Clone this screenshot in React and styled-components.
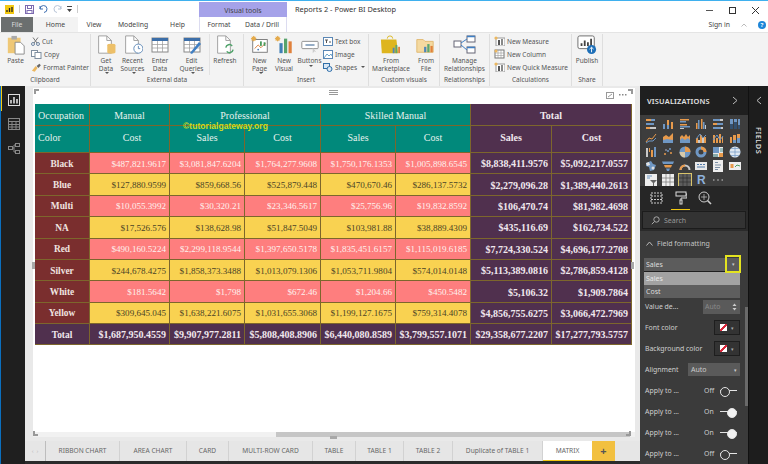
import React from 'react';
import styled, { createGlobalStyle } from 'styled-components';

const Global = createGlobalStyle`
  html, body { margin: 0; padding: 0; background: #fff; }
  * { box-sizing: border-box; }
`;

const Shell = styled.div`
  width: 768px;
  height: 464px;
  overflow: hidden;
  display: flex;
  flex-direction: column;
  position: relative;
  font-family: "Noto Sans", sans-serif;
  font-size: 6.5px;
  color: #444;
  background: #fff;
  border-top: 1px solid #3fb0ee;
`;

const TitleBar = styled.div`
  height: 16px;
  display: flex;
  align-items: center;
  padding-left: 5px;
  flex: none;
  background: #fff;
`;

const QuickAccess = styled.div`
  width: 194px;
  display: flex;
  align-items: center;
  gap: 5px;
`;

const Divider = styled.span`
  width: 1px;
  height: 8px;
  background: #ccc;
`;

const ContextHeader = styled.div`
  width: 88px;
  height: 16px;
  margin-top: 1px;
  background: #a5a2e9;
  color: #444;
  font-size: 7px;
  text-align: center;
  line-height: 18px;
`;

const WindowTitle = styled.div`
  margin-left: 8px;
  font-size: 7.4px;
  color: #333;
  flex: 1;
`;

const WindowButtons = styled.div`
  display: flex;
  align-items: center;
  gap: 16px;
  padding-right: 9px;
  margin-top: 2px;
`;

const TabRow = styled.div`
  height: 15px;
  display: flex;
  flex: none;
  align-items: stretch;
  padding-left: 1px;
  background: #fff;
`;

const Tab = styled.div`
  width: ${(p) => p.$w}px;
  text-align: center;
  font-size: 6.8px;
  line-height: 15px;
  color: ${(p) => (p.$file ? '#ddd' : '#444')};
  background: ${(p) => (p.$file ? '#6b6f6f' : p.$active ? '#f3f3f3' : 'transparent')};
  border-left: ${(p) => (p.$ctx ? '1px solid #dcdcf0' : 'none')};
  border-right: ${(p) => (p.$ctxEnd ? '1px solid #dcdcf0' : 'none')};
`;

const SignIn = styled.div`
  margin-left: auto;
  display: flex;
  align-items: center;
  gap: 11px;
  padding-right: 2px;
  font-size: 6.8px;
  color: #444;
`;

const HelpDot = styled.span`
  width: 8px;
  height: 8px;
  border-radius: 50%;
  background: #1e86d8;
  color: #fff;
  font-size: 6px;
  font-weight: 700;
  line-height: 8px;
  text-align: center;
`;

const Ribbon = styled.div`
  height: 54px;
  flex: none;
  display: flex;
  background: #f3f3f3;
  border-top: 1px solid #e4e4e4;
`;

const Group = styled.div`
  width: ${(p) => p.$w}px;
  height: 52px;
  margin-top: 1px;
  display: flex;
  flex-direction: column;
  border-right: 1px solid #dedede;
`;

const GroupBody = styled.div`
  height: 41px;
  flex: none;
  display: flex;
  justify-content: ${(p) => p.$justify || 'flex-start'};
  padding-left: ${(p) => p.$pad || 0}px;
`;

const GroupLabel = styled.div`
  height: 11px;
  text-align: center;
  font-size: 6.5px;
  line-height: 10px;
  color: #555;
`;

const BigButton = styled.div`
  width: ${(p) => p.$w}px;
  display: flex;
  flex-direction: column;
  align-items: center;
  padding-top: 1px;
  line-height: 7.6px;
  text-align: center;
  color: #555;
  white-space: nowrap;
  border-right: ${(p) => (p.$sep ? '1px solid #e2e2e2' : 'none')};
`;

const BigIcon = styled.div`
  height: 20px;
  margin-bottom: 2px;
  & > svg { display: block; height: 20px; width: auto; }
`;

const SmallStack = styled.div`
  width: ${(p) => p.$w}px;
  display: flex;
  flex-direction: column;
  gap: 3px;
  padding-top: 2px;
`;

const SmallButton = styled.div`
  height: 10px;
  display: flex;
  align-items: center;
  gap: 2px;
  color: #555;
  white-space: nowrap;
`;

const Main = styled.div`
  flex: 1;
  min-height: 0;
  display: flex;
`;

const LeftRail = styled.div`
  width: 25px;
  flex: none;
  background: #1f1f1f;
  border-left: 1px solid #0b6fbe;
  display: flex;
  flex-direction: column;
`;

const RailItem = styled.div`
  height: 25px;
  display: flex;
  align-items: center;
  justify-content: center;
  padding-top: ${(p) => p.$top || 0}px;
  border-left: 1px solid ${(p) => (p.$active ? '#f2c811' : 'transparent')};
`;

const Center = styled.div`
  width: 615px;
  flex: none;
  display: flex;
  flex-direction: column;
  background: #e9e9e9;
  border-bottom: 3px solid #2b2b2b;
`;

const Canvas = styled.div`
  flex: 1;
  min-height: 0;
  padding: 2px 5px 4px 8px;
  display: flex;
  flex-direction: column;
  position: relative;
`;

const Page = styled.div`
  flex: 1;
  background: #fff;
  padding-left: 2px;
`;

const VisualHead = styled.div`
  height: 16px;
  width: 597px;
  display: flex;
  align-items: center;
  justify-content: flex-end;
  gap: 5px;
  padding: 0 5px 2px 0;
`;

const Corner = styled.span`
  position: absolute;
  width: 5px;
  height: 5px;
  ${(p) => p.$tl && 'left: 9px; top: 3px; border-left: 2px solid #999; border-top: 2px solid #999;'}
  ${(p) => p.$tr && 'left: 603px; top: 3px; border-right: 2px solid #999; border-top: 2px solid #999;'}
  ${(p) => p.$bl && 'left: 8px; bottom: 5px; border-left: 2px solid #999; border-bottom: 2px solid #999;'}
  ${(p) => p.$br && 'left: 601px; bottom: 5px; border-right: 2px solid #999; border-bottom: 2px solid #999;'}
`;

const Grip = styled.span`
  position: absolute;
  background: #a8a8a8;
  ${(p) => p.$pos === 'left' && 'left: 7px; top: 176px; width: 3px; height: 7px;'}
  ${(p) => p.$pos === 'right' && 'left: 606px; top: 176px; width: 3px; height: 7px;'}
  ${(p) => p.$pos === 'bottom' && 'left: 305px; bottom: 2px; width: 7px; height: 3px;'}
`;

const TopGrip = styled.span`
  position: absolute;
  left: 304px;
  top: 4px;
  width: 9px;
  height: 5px;
  border-top: 1px solid #999;
  border-bottom: 1px solid #999;
  &::after {
    content: '';
    display: block;
    margin-top: 1px;
    height: 1px;
    background: #999;
  }
`;

const Matrix = styled.div`
  position: relative;
  width: 597px;
  display: grid;
  grid-template-columns: 55px 5px 75px 75px 76px 75px 75px 81px 80px;
  grid-template-rows: 22px 27px repeat(8, 21.4px) 21px;
  font-family: "Liberation Serif", serif;
`;

const toneColors = {
  teal: ['#01897b', '#e6f2ee'],
  maroon: ['#7a2e2e', '#f0e4e0'],
  pink: ['#fe7e7e', '#fdf2ee'],
  yellow: ['#f9d251', '#4a4326'],
  purple: ['#50304e', '#f0e8ee'],
};

const Cell = styled.div`
  grid-column: span ${(p) => p.$span || 1};
  background: ${(p) => toneColors[p.$tone][0]};
  color: ${(p) => toneColors[p.$tone][1]};
  border-right: 1px solid #7d662c;
  border-bottom: 1px solid #7d662c;
  display: flex;
  align-items: ${(p) => (p.$head ? 'flex-start' : 'center')};
  justify-content: ${(p) => p.$align || 'flex-end'};
  padding: ${(p) => (p.$head ? '6px 3px 0' : '1px 3px 0')};
  font-size: ${(p) => (p.$name ? 9.4 : p.$bold || p.$head ? 10 : 9.1)}px;
  font-weight: ${(p) => (p.$bold ? 700 : 400)};
  white-space: nowrap;
  overflow: hidden;
`;

const Watermark = styled.div`
  position: absolute;
  left: 148px;
  top: 17px;
  font-family: "Liberation Sans", sans-serif;
  font-size: 8.6px;
  font-weight: 700;
  color: #cfdc1e;
`;

const HScroll = styled.div`
  height: 5px;
  flex: none;
  background: #f1f1f1;
  display: flex;
  align-items: center;
  padding: 0 5px 0 243px;
  margin-top: 0;
`;

const HThumb = styled.div`
  flex: 1;
  height: 5px;
  background: #c6c6c6;
`;

const SheetBar = styled.div`
  height: 20px;
  flex: none;
  display: flex;
  background: #e6e6e6;
  align-items: stretch;
`;

const SheetArrows = styled.div`
  width: 21px;
  display: flex;
  align-items: center;
  justify-content: center;
  gap: 3px;
  font-size: 6px;
  color: #bbb;
  border-right: 1px solid #bdbdbd;
`;

const Sheet = styled.div`
  width: ${(p) => p.$w}px;
  text-align: center;
  font-size: 6.6px;
  line-height: 20px;
  color: #666;
  white-space: nowrap;
  background: ${(p) => (p.$active ? '#fff' : 'transparent')};
  border-right: ${(p) => (p.$active ? 'none' : '1px solid #d2d2d2')};
  border-bottom: ${(p) => (p.$active ? '1px solid #f2c811' : 'none')};
`;

const AddSheet = styled.div`
  width: 23px;
  background: #f2c040;
  color: #555;
  font-size: 11px;
  font-weight: 700;
  line-height: 19px;
  text-align: center;
`;

const Panel = styled.div`
  width: 108px;
  flex: none;
  background: #3b3b3b;
  display: flex;
  flex-direction: column;
  position: relative;
`;

const PanelHead = styled.div`
  height: 29px;
  flex: none;
  background: #1f1f1f;
  display: flex;
  align-items: center;
  justify-content: space-between;
  padding: 0 10px 0 7px;
  color: #e4e4e4;
  font-size: 7.4px;
  font-weight: 600;
  letter-spacing: 0.2px;
`;

const VizGrid = styled.div`
  height: 71px;
  flex: none;
  margin-left: 2px;
  background: #3d3d3d;
  display: grid;
  grid-template-columns: repeat(6, 16.7px);
  grid-auto-rows: 14px;
  padding: 2px 0 0 1px;
  justify-items: center;
  align-items: center;
`;

const VizSlot = styled.div`
  width: 14px;
  height: 14px;
  display: flex;
  align-items: center;
  justify-content: center;
  border: 1px solid ${(p) => (p.$selected ? '#d9c46a' : 'transparent')};
  color: #8fb2dc;
  font-family: "Liberation Sans", sans-serif;
  font-size: 12px;
  font-weight: 700;
`;

const PaneTabs = styled.div`
  height: 24px;
  flex: none;
  background: #262626;
  display: flex;
  padding-left: 7px;
  gap: 5px;
`;

const PaneTab = styled.div`
  width: 19px;
  display: flex;
  align-items: center;
  justify-content: center;
  border-bottom: 1px solid ${(p) => (p.$active ? '#f2c811' : 'transparent')};
`;

const SearchWrap = styled.div`
  height: 21px;
  flex: none;
  background: #2a2a2a;
  padding: 1px 2px 2px 2px;
`;

const SearchBox = styled.div`
  height: 18px;
  background: #333;
  border: 1px solid #1c1c1c;
  display: flex;
  align-items: center;
  gap: 4px;
  padding-left: 8px;
  color: #999;
  font-size: 7px;
`;

const PaneBody = styled.div`
  flex: 1;
  min-height: 0;
  position: relative;
  padding: 0 2px 0 5px;
  color: #cfcfcf;
  font-size: 6.9px;
`;

const SectionHead = styled.div`
  height: 27px;
  display: flex;
  align-items: center;
  gap: 4px;
  padding: 0 0 2px 1px;
  font-size: 7px;
  color: #c4c4c4;
`;

const SelectWrap = styled.div`
  position: relative;
  width: 96px;
  margin-left: -1px;
  height: 38px;
  z-index: 1;
`;

const SelectTop = styled.div`
  height: 14px;
  background: #5c5c5c;
  border-bottom: 1px solid #1f1f1f;
  display: flex;
  align-items: center;
  padding-left: 2px;
  color: #ddd;
  font-size: 7px;
`;

const Highlight = styled.span`
  position: absolute;
  right: -1px;
  top: -3px;
  width: 16px;
  height: 18px;
  border: 2px solid #e3e320;
  display: flex;
  align-items: center;
  justify-content: center;
  color: #ccc;
  font-size: 5px;
`;

const Option = styled.div`
  height: 13px;
  padding-left: 2px;
  line-height: 13px;
  font-size: 7px;
  color: ${(p) => (p.$active ? '#e8e8e8' : '#ddd')};
  background: ${(p) => (p.$active ? '#a2a2a2' : '#5e5e5e')};
`;

const FormRow = styled.div`
  height: 21px;
  width: 95px;
  display: flex;
  align-items: center;
  justify-content: space-between;
  white-space: nowrap;
`;

const SpinBox = styled.div`
  width: 37px;
  height: 14px;
  background: #5a5a5a;
  color: #8a8a8a;
  display: flex;
  align-items: center;
  justify-content: space-between;
  padding: 0 3px 0 2px;
`;

const ColorPick = styled.div`
  width: 26px;
  height: 15px;
  background: #333;
  border: 1px solid #1e1e1e;
  display: flex;
  align-items: center;
  justify-content: center;
  gap: 4px;
  color: #aaa;
  font-size: 5px;
`;

const Swatch = styled.span`
  width: 7px;
  height: 7px;
  background: linear-gradient(135deg, #fff 42%, #d8283c 42%, #d8283c 58%, #fff 58%);
`;

const AlignSelect = styled.div`
  width: 52px;
  height: 13px;
  background: #5a5a5a;
  color: #ccc;
  display: flex;
  align-items: center;
  justify-content: space-between;
  padding: 0 3px 0 3px;
  font-size: 5px;
  & > span:first-child { font-size: 7px; }
`;

const ToggleGroup = styled.div`
  display: flex;
  align-items: center;
  gap: 6px;
  width: 36px;
  justify-content: flex-start;
`;

const ToggleTrack = styled.span`
  position: relative;
  width: 17px;
  height: 1px;
  background: #e4e4e4;
  &::after {
    content: '';
    position: absolute;
    top: -3px;
    ${(p) => (p.$on ? 'right: 0; background: #f2f2f2;' : 'left: 0; background: #3b3b3b;')}
    width: 8px;
    height: 8px;
    border-radius: 50%;
    border: 1px solid #e4e4e4;
  }
`;

const ScrollThumb = styled.span`
  position: absolute;
  left: 105px;
  top: 76px;
  width: 3px;
  height: 99px;
  background: #6a6a6a;
`;

const FieldsStrip = styled.div`
  width: 20px;
  flex: none;
  background: #1d1d1d;
  border-left: 1px solid #111;
  color: #ddd;
  display: flex;
  flex-direction: column;
  align-items: center;
  padding-top: 10px;
  gap: 22px;
`;

const FieldsLabel = styled.div`
  writing-mode: vertical-rl;
  font-size: 7.4px;
  font-weight: 600;
  letter-spacing: 0.5px;
`;

const O = '#e79a4c';
const B = '#6f97c4';
const G = '#c9c9c9';

function Rects({ list }) {
  return list.map(([x, y, w, h, c], i) => <rect key={i} x={x} y={y} width={w} height={h} fill={c} />);
}

function Mini({ children }) {
  return <svg width="12" height="12" viewBox="0 0 12 12">{children}</svg>;
}

const hBars = [[1, 1, 5, 2, O], [6, 1, 4, 2, B], [1, 5, 8, 2, B], [1, 9, 4, 2, O], [5, 9, 6, 2, G]];
const vBars = [[1, 6, 2, 5, B], [5, 2, 2, 9, O], [9, 4, 2, 7, O], [5, 7, 2, 4, B]];
const hGroup = [[1, 1, 9, 1.5, O], [1, 3, 6, 1.5, B], [1, 6, 7, 1.5, O], [1, 8, 10, 1.5, B], [1, 10, 4, 1, G]];
const vGroup = [[1, 5, 1.5, 6, O], [3, 2, 1.5, 9, B], [6, 1, 1.5, 10, O], [8, 4, 1.5, 7, B], [10, 7, 1, 4, G]];
const hFull = [[1, 1, 7, 2, B], [8, 1, 3, 2, G], [1, 5, 4, 2, O], [5, 5, 6, 2, B], [1, 9, 8, 2, B], [9, 9, 2, 2, G]];
const vFull = [[1, 1, 3, 5, B], [1, 6, 3, 5, '#33506f'], [5, 1, 3, 3, B], [5, 4, 3, 7, '#33506f'], [9, 1, 2, 6, B], [9, 7, 2, 4, '#33506f']];
const combo = [[1, 6, 2, 5, O], [5, 3, 2, 8, O], [9, 5, 2, 6, O], [3, 8, 2, 3, G], [7, 6, 2, 5, G]];
const ribbonBars = [[1, 5, 2, 6, O], [4, 3, 3, 8, O], [8, 2, 3, 4, O], [8, 6, 3, 5, B], [4, 8, 3, 3, B]];

const vizIcons = [
  <Mini><Rects list={hBars} /></Mini>,
  <Mini><Rects list={vBars} /></Mini>,
  <Mini><Rects list={hGroup} /></Mini>,
  <Mini><Rects list={vGroup} /></Mini>,
  <Mini><Rects list={hFull} /></Mini>,
  <Mini><Rects list={vFull} /></Mini>,
  <Mini><path d="M1 10 L4 6 L7 7 L11 2" stroke={O} fill="none" /><path d="M1 11 L4 9 L8 9 L11 6" stroke={B} fill="none" /></Mini>,
  <Mini><path d="M1 11 V5 L4 3 L7 5 L11 1 V11 Z" fill={O} /><path d="M1 11 V8 L5 7 L11 8 V11 Z" fill={B} /></Mini>,
  <Mini><path d="M1 11 V5 L3 3 L5 5 L7 2 L9 5 L11 3 V11 Z" fill={O} /><path d="M1 11 V8 L3 6 L6 8 L9 6 L11 8 V11 Z" fill={B} /></Mini>,
  <Mini><Rects list={combo} /><path d="M1 7 L5 2 L8 6 L11 3" stroke={B} fill="none" /></Mini>,
  <Mini><Rects list={[[1, 3, 2, 8, O], [4, 6, 2, 5, O], [7, 2, 2, 9, O], [10, 5, 1, 6, O]]} /><path d="M1 8 L5 3 L8 8 L11 4" stroke={B} fill="none" /></Mini>,
  <Mini><Rects list={ribbonBars} /></Mini>,
  <Mini><Rects list={[[1, 2, 2, 9, G], [4, 2, 1, 4, O], [6, 4, 2, 7, O], [9, 1, 2, 10, B]]} /></Mini>,
  <Mini><circle cx="3" cy="8" r="1" fill={O} /><circle cx="6" cy="5" r="1" fill={B} /><circle cx="9" cy="7" r="1" fill={O} /><circle cx="8" cy="3" r="1" fill={B} /><circle cx="4" cy="4" r="1" fill="#889" /></Mini>,
  <Mini><circle cx="6" cy="6" r="5.5" fill={B} /><path d="M6 6 V.5 A5.5 5.5 0 0 1 11.5 6 Z" fill={O} /><path d="M6 6 H.5 A5.5 5.5 0 0 0 6 11.5 Z" fill="#d8c9a8" /></Mini>,
  <Mini><circle cx="6" cy="6" r="4" fill="none" stroke={B} strokeWidth="3" /><path d="M6 2 A4 4 0 0 1 10 6" fill="none" stroke={O} strokeWidth="3" /></Mini>,
  <Mini><Rects list={[[1, 1, 10, 10, '#e8e8e8'], [1, 1, 6, 6, B], [7, 7, 4, 4, O], [1, 8, 5, 3, '#8aa'], [8, 2, 3, 4, '#9bb']]} /></Mini>,
  <Mini><circle cx="6" cy="6" r="5.5" fill="#dfe8f2" /><path d="M.5 6 H11.5 M6 .5 V11.5 M2 2.5 H10 M2 9.5 H10" stroke={B} strokeWidth=".7" /></Mini>,
  <Mini><path d="M1 3 L6 1 L8 4 L11 5 L9 10 L5 11 L4 7 L1 6 Z" fill={B} /><path d="M1 3 L4 2 L5 5 L2 6 Z" fill="#e4e4e4" /><circle cx="8" cy="8" r="1.5" fill="#ddd" /></Mini>,
  <Mini><path d="M0 1.5 H12 L11 4 H1 Z" fill={B} /><path d="M2 5 H10 L9 7.5 H3 Z" fill={O} /><path d="M4 8.5 H8 L7 11 H5 Z" fill={B} /></Mini>,
  <Mini><path d="M1.5 10 A4.5 4.5 0 0 1 10.5 10" fill="none" stroke={G} strokeWidth="2" /><path d="M1.5 10 A4.5 4.5 0 0 1 6 5.5" fill="none" stroke={O} strokeWidth="2" /></Mini>,
  <Mini><rect x="0" y="2" width="12" height="8" fill="#e8e8e8" /><path d="M2 4.5 H4 M5 4.5 H7 M8 4.5 H10 M2 7 H10" stroke="#4f79a8" /></Mini>,
  <Mini><rect x="1" y="0" width="10" height="12" fill="#eee" /><path d="M3 2.5 H6 M3 5 H9 M3 7.5 H8 M3 9.5 H6" stroke="#7b8fa6" /></Mini>,
  <Mini><rect x="0" y="2" width="12" height="8" fill="#eee" /><rect x="1.5" y="4" width="3" height="4" fill={O} /><path d="M6 7 L8 5 L11 6" stroke="#4d9a5d" fill="none" /></Mini>,
  <Mini><rect x="0" y="0" width="12" height="12" fill="#eee" /><path d="M2 2 H7 M2 4 H5" stroke={B} /><path d="M5 6 H12 L9 9 V12 H8 V9 Z" fill="#666" /></Mini>,
  <Mini><rect x="0" y="0" width="12" height="12" fill="#eee" /><path d="M4 0 V12 M8 0 V12 M0 4 H12 M0 8 H12" stroke="#777" strokeWidth=".7" /></Mini>,
  <Mini><rect x="0" y="0" width="12" height="12" fill="#5c5c5c" /><path d="M4 0 V12 M8 0 V12 M0 4 H12 M0 8 H12" stroke="#2e2e2e" strokeWidth=".7" /></Mini>,
  'R',
  <Mini><path d="M1 6 H2.5 M5.2 6 H6.8 M9.5 6 H11" stroke="#ccc" /></Mini>,
];

function Doc({ children }) {
  return (
    <svg width="24" height="22" viewBox="0 0 24 22">
      <path d="M4 1 H13 L18 6 V20 H4 Z" fill="#fff" stroke="#9a9a9a" />
      <path d="M13 1 V6 H18" fill="none" stroke="#9a9a9a" />
      {children}
    </svg>
  );
}

function Sun({ x = 3, y = 4 }) {
  return <g stroke="#e3a94a" strokeWidth="1"><circle cx={x} cy={y} r="2" fill="#f0c060" /><path d={`M${x - 3} ${y} H${x + 3} M${x} ${y - 3} V${y + 3} M${x - 2} ${y - 2} L${x + 2} ${y + 2} M${x + 2} ${y - 2} L${x - 2} ${y + 2}`} /></g>;
}

function TableIcon({ children }) {
  return (
    <svg width="20" height="20" viewBox="0 0 20 20">
      <rect x="2" y="3" width="16" height="14" fill="#fff" stroke="#888" />
      <rect x="2" y="3" width="16" height="3" fill="#3c6ea8" />
      <path d="M7.5 6 V17 M12.5 6 V17 M2 9.5 H18 M2 13 H18" stroke="#999" strokeWidth=".7" />
      {children}
    </svg>
  );
}

const icons = {
  paste: (
    <svg width="22" height="22" viewBox="0 0 22 22">
      <rect x="2" y="3" width="14" height="17" fill="#efc877" />
      <rect x="6" y="1" width="6" height="4" fill="#aaa" />
      <path d="M10 8 H16 L20 12 V21 H10 Z" fill="#fff" stroke="#888" />
    </svg>
  ),
  cut: (
    <svg width="9" height="9" viewBox="0 0 9 9" fill="none" stroke="#6d87a3">
      <circle cx="2" cy="7" r="1.5" /><circle cx="7" cy="7" r="1.5" />
      <path d="M3 6 L7 .5 M6 6 L2 .5" stroke="#777" />
    </svg>
  ),
  copy: (
    <svg width="11" height="9" viewBox="0 0 11 9" fill="#fff" stroke="#7f8fa0">
      <rect x=".5" y=".5" width="6" height="6" /><rect x="4" y="2.5" width="6" height="6" />
    </svg>
  ),
  painter: (
    <svg width="11" height="9" viewBox="0 0 11 9">
      <path d="M1 8 L5 3 L7 5 L4 9 Z" fill="#ecb75f" />
      <path d="M6 3 L9 .5 L10.5 2 L8 5 Z" fill="#666" />
    </svg>
  ),
  getData: <Doc><ellipse cx="18" cy="11" rx="4.5" ry="1.5" fill="#edc069" /><path d="M13.5 11 V19 A4.5 1.5 0 0 0 22.5 19 V11 Z" fill="#edc069" /></Doc>,
  recent: <Doc><circle cx="18" cy="15" r="5" fill="#fff" stroke="#5b86b5" /><path d="M18 12 V15 H20" stroke="#5b86b5" fill="none" /></Doc>,
  enter: <TableIcon />,
  edit: <TableIcon><path d="M8 18 L17 7 L19 9 L10 19 Z" fill="#3f7fc4" /></TableIcon>,
  refresh: <Doc><path d="M13 14 A4 4 0 0 1 20 12 M21 16 A4 4 0 0 1 14 18" stroke="#4fa36a" strokeWidth="1.6" fill="none" /></Doc>,
  newPage: (
    <svg width="22" height="22" viewBox="0 0 22 22">
      <rect x="3" y="5" width="16" height="14" fill="#fff" stroke="#777" />
      <path d="M5 15 L9 11 L12 14 L17 9" stroke="#d9772f" fill="none" />
      <rect x="11" y="7" width="2" height="5" fill="#4a9a5c" /><rect x="15" y="8" width="2" height="4" fill="#4a9a5c" />
      <circle cx="9" cy="16" r="1" fill="#4a7bb5" /><Sun x={4} y={4} />
    </svg>
  ),
  newVisual: (
    <svg width="22" height="22" viewBox="0 0 22 22">
      <rect x="6" y="9" width="3.5" height="11" fill="#3f7fb5" />
      <rect x="11" y="4" width="3.5" height="16" fill="#58a36b" />
      <rect x="16" y="7" width="3.5" height="13" fill="#e0813c" />
      <Sun x={4} y={4} />
    </svg>
  ),
  buttons: (
    <svg width="22" height="22" viewBox="0 0 22 22">
      <rect x="2" y="7" width="18" height="8" rx="1" fill="#fff" stroke="#888" />
      <path d="M6 11 H16" stroke="#5a7fa6" strokeWidth="1.4" />
      <path d="M14 14 L14 20 L16 18 L18 19 Z" fill="#ccc" />
    </svg>
  ),
  textBox: (
    <svg width="10" height="9" viewBox="0 0 10 9">
      <rect x=".5" y=".5" width="9" height="8" fill="#fff" stroke="#5a87b5" />
      <path d="M2 3 H5 M3.5 3 V6 M6 5 H8" stroke="#555" />
    </svg>
  ),
  image: (
    <svg width="10" height="9" viewBox="0 0 10 9">
      <rect x=".5" y=".5" width="9" height="8" fill="#fff" stroke="#5a87b5" />
      <path d="M1 8 L4 4 L6 6 L8 4 L9 6" stroke="#6aa3c9" fill="none" />
    </svg>
  ),
  shapes: (
    <svg width="10" height="9" viewBox="0 0 10 9" fill="#d7e6f4" stroke="#2f6ea8">
      <rect x=".5" y=".5" width="6" height="5" /><circle cx="6.5" cy="6" r="2.5" />
    </svg>
  ),
  market: (
    <svg width="24" height="22" viewBox="0 0 24 22">
      <path d="M8 4 A3 3 0 0 1 14 4" stroke="#d9b620" fill="none" />
      <path d="M1 5 L18 5 L20 20 H2 Z" fill="#deb51e" />
      <rect x="14" y="14" width="2" height="6" fill="#4f86b8" />
      <rect x="17" y="11" width="2" height="9" fill="#5ba56f" />
      <rect x="20" y="13" width="2" height="7" fill="#e0813c" />
    </svg>
  ),
  fromFile: (
    <svg width="24" height="22" viewBox="0 0 24 22">
      <path d="M2 5 H9 L11 7 H20 V19 H2 Z" fill="#f4d9a0" stroke="#e0b76e" />
      <rect x="10" y="13" width="2.5" height="6" fill="#4f86b8" />
      <rect x="13.5" y="10" width="2.5" height="9" fill="#5ba56f" />
      <rect x="17" y="12" width="2.5" height="7" fill="#e0813c" />
    </svg>
  ),
  manage: (
    <svg width="24" height="20" viewBox="0 0 24 20">
      <rect x="1" y="6" width="7" height="6" fill="#fff" stroke="#667" />
      <rect x="14" y="1" width="8" height="6" fill="#fff" stroke="#667" />
      <rect x="14" y="12" width="8" height="6" fill="#fff" stroke="#667" />
      <path d="M14 1.5 H22 M14 12.5 H22" stroke="#3f7fc4" strokeWidth="1.4" />
      <path d="M8 8 L14 4 M8 10 L14 15" stroke="#3f7fc4" />
    </svg>
  ),
  measure: (
    <svg width="11" height="10" viewBox="0 0 11 10">
      <rect x="2" y="2" width="9" height="8" fill="#fff" stroke="#999" />
      <rect x="4" y="4" width="2" height="5" fill="#555" /><rect x="7" y="3" width="2" height="6" fill="#888" />
      <circle cx="2" cy="2" r="1.6" fill="#ecb75f" />
    </svg>
  ),
  column: (
    <svg width="11" height="10" viewBox="0 0 11 10">
      <rect x="1" y="1" width="9" height="8" fill="#fff" stroke="#777" />
      <path d="M4 1 V9 M7 1 V9 M1 4 H10 M1 6.5 H10" stroke="#999" strokeWidth=".6" />
      <circle cx="2" cy="2" r="1.5" fill="#ecb75f" />
    </svg>
  ),
  publish: (
    <svg width="22" height="22" viewBox="0 0 22 22">
      <rect x="1" y="1" width="18" height="14" rx="2" fill="#fff" stroke="#666" />
      <path d="M5 12 V9 M8.5 12 V6 M12 12 V8 M15.5 12 V4" stroke="#444" strokeWidth="2" />
      <circle cx="16" cy="16" r="5" fill="#1e6fb8" />
      <path d="M16 19 V13.5 M13.8 15.5 L16 13.5 L18.2 15.5" stroke="#fff" fill="none" />
    </svg>
  ),
};

const Arrow = styled.span`
  display: inline-block;
  width: 0;
  height: 0;
  margin-left: 2px;
  vertical-align: middle;
  border-left: 2px solid transparent;
  border-right: 2px solid transparent;
  border-top: 2px solid #555;
`;

function Big({ w, icon, sep, children }) {
  return (
    <BigButton $w={w} $sep={sep}>
      <BigIcon>{icon}</BigIcon>
      {children}
    </BigButton>
  );
}

const rows = [
  ['Black', '$487,821.9617', '$3,081,847.6204', '$1,764,277.9608', '$1,750,176.1353', '$1,005,898.6545', '$8,838,411.9576', '$5,092,217.0557'],
  ['Blue', '$127,880.9599', '$859,668.56', '$525,879.448', '$470,670.46', '$286,137.5732', '$2,279,096.28', '$1,389,440.2613'],
  ['Multi', '$10,055.3992', '$30,320.21', '$23,346.5617', '$25,756.96', '$19,832.8592', '$106,470.74', '$81,982.4698'],
  ['NA', '$17,526.576', '$138,628.98', '$51,847.5049', '$103,981.88', '$38,889.4309', '$435,116.69', '$162,734.522'],
  ['Red', '$490,160.5224', '$2,299,118.9544', '$1,397,650.5178', '$1,835,451.6157', '$1,115,019.6185', '$7,724,330.524', '$4,696,177.2708'],
  ['Silver', '$244,678.4275', '$1,858,373.3488', '$1,013,079.1306', '$1,053,711.9804', '$574,014.0148', '$5,113,389.0816', '$2,786,859.4128'],
  ['White', '$181.5642', '$1,798', '$672.46', '$1,204.66', '$450.5482', '$5,106.32', '$1,909.7864'],
  ['Yellow', '$309,645.045', '$1,638,221.6075', '$1,031,655.3068', '$1,199,127.1675', '$759,314.4078', '$4,856,755.6275', '$3,066,472.7969'],
];

const totals = ['$1,687,950.4559', '$9,907,977.2811', '$5,808,408.8906', '$6,440,080.8589', '$3,799,557.1071', '$29,358,677.2207', '$17,277,793.5757'];

const sheets = [
  ['RIBBON CHART', 74], ['AREA CHART', 67], ['CARD', 42], ['MULTI-ROW CARD', 84], ['TABLE', 43],
  ['TABLE 1', 48], ['TABLE 2', 49], ['Duplicate of TABLE 1', 90],
];

function MatrixTable() {
  return (
    <Matrix>
      <Cell $tone="teal" $head $align="flex-start">Occupation</Cell>
      <Cell $tone="teal" $head $span={2} $align="center">Manual</Cell>
      <Cell $tone="teal" $head $span={2} $align="center">Professional</Cell>
      <Cell $tone="teal" $head $span={2} $align="center">Skilled Manual</Cell>
      <Cell $tone="purple" $head $bold $span={2} $align="center">Total</Cell>

      <Cell $tone="teal" $head $align="flex-start">Color</Cell>
      <Cell $tone="teal" $head />
      <Cell $tone="teal" $head $align="center">Cost</Cell>
      <Cell $tone="teal" $head $align="center">Sales</Cell>
      <Cell $tone="teal" $head $align="center">Cost</Cell>
      <Cell $tone="teal" $head $align="center">Sales</Cell>
      <Cell $tone="teal" $head $align="center">Cost</Cell>
      <Cell $tone="purple" $head $bold $align="center">Sales</Cell>
      <Cell $tone="purple" $head $bold $align="center">Cost</Cell>

      {rows.map(([name, ...values], r) => {
        const tone = r % 2 === 0 ? 'pink' : 'yellow';
        return (
          <React.Fragment key={name}>
            <Cell $tone="maroon" $bold $name $align="center">{name}</Cell>
            <Cell $tone={tone} />
            {values.map((v, i) => (
              <Cell key={i} $tone={i > 4 ? 'purple' : tone} $bold={i > 4}>{v}</Cell>
            ))}
          </React.Fragment>
        );
      })}

      <Cell $tone="purple" $bold $name $align="center">Total</Cell>
      <Cell $tone="purple" />
      {totals.map((v) => <Cell key={v} $tone="purple" $bold>{v}</Cell>)}

      <Watermark>©tutorialgateway.org</Watermark>
    </Matrix>
  );
}

function Toggle({ on }) {
  return (
    <FormRow>
      <span>Apply to ...</span>
      <ToggleGroup>
        <span>{on ? 'On' : 'Off'}</span>
        <ToggleTrack $on={on} />
      </ToggleGroup>
    </FormRow>
  );
}

function VizPanel() {
  return (
    <Panel>
      <PanelHead>
        <span>VISUALIZATIONS</span>
        <svg width="6" height="9" viewBox="0 0 6 9" fill="none" stroke="#bbb"><path d="M1 1 L5 4.5 L1 8" /></svg>
      </PanelHead>
      <VizGrid>
        {vizIcons.map((icon, i) => <VizSlot key={i} $selected={i === 26}>{icon}</VizSlot>)}
      </VizGrid>
      <PaneTabs>
        <PaneTab>
          <svg width="13" height="12" viewBox="0 0 13 12" fill="none" stroke="#ccc"><rect x="1" y="1" width="11" height="10" strokeDasharray="2 1" /><path d="M1 4 H12 M1 7.5 H12" strokeDasharray="2 1" /></svg>
        </PaneTab>
        <PaneTab $active>
          <svg width="12" height="14" viewBox="0 0 12 14" fill="none" stroke="#ddd"><rect x="1" y="1" width="10" height="4" /><path d="M11 3 H12 V7 H6 V9" /><rect x="5" y="9" width="2" height="4" /></svg>
        </PaneTab>
        <PaneTab>
          <svg width="14" height="14" viewBox="0 0 14 14" fill="none" stroke="#ccc"><circle cx="6" cy="6" r="5" /><path d="M3 6 H9 M6 3 V9" strokeWidth=".7" /><path d="M9.5 9.5 L13 13" strokeWidth="1.6" /></svg>
        </PaneTab>
      </PaneTabs>
      <SearchWrap>
        <SearchBox>
          <svg width="9" height="9" viewBox="0 0 9 9" fill="none" stroke="#aaa"><circle cx="5.5" cy="3.5" r="2.7" /><path d="M3.5 5.5 L.8 8.2" /></svg>
          Search
        </SearchBox>
      </SearchWrap>
      <PaneBody>
        <SectionHead>
          <svg width="7" height="5" viewBox="0 0 7 5" fill="none" stroke="#bbb"><path d="M.5 4.5 L3.5 1 L6.5 4.5" /></svg>
          Field formatting
        </SectionHead>
        <SelectWrap>
          <SelectTop>Sales</SelectTop>
          <Highlight>▾</Highlight>
          <Option $active>Sales</Option>
          <Option>Cost</Option>
        </SelectWrap>
        <FormRow>
          <span>Value de...</span>
          <SpinBox>
            <span>Auto</span>
            <svg width="5" height="8" viewBox="0 0 5 8" fill="#ccc"><path d="M.5 3 L2.5 .5 L4.5 3 Z M.5 5 L2.5 7.5 L4.5 5 Z" /></svg>
          </SpinBox>
        </FormRow>
        <FormRow>
          <span>Font color</span>
          <ColorPick><Swatch />▾</ColorPick>
        </FormRow>
        <FormRow>
          <span>Background color</span>
          <ColorPick><Swatch />▾</ColorPick>
        </FormRow>
        <FormRow>
          <span>Alignment</span>
          <AlignSelect><span>Auto</span><span>▾</span></AlignSelect>
        </FormRow>
        <Toggle />
        <Toggle on />
        <Toggle on />
        <Toggle />
        <ScrollThumb />
      </PaneBody>
    </Panel>
  );
}

function RibbonBar() {
  return (
    <Ribbon>
      <Group $w={91}>
        <GroupBody>
          <Big w={31} icon={icons.paste}>Paste</Big>
          <SmallStack $w={58}>
            <SmallButton>{icons.cut} Cut</SmallButton>
            <SmallButton>{icons.copy} Copy</SmallButton>
            <SmallButton>{icons.painter} Format Painter</SmallButton>
          </SmallStack>
        </GroupBody>
        <GroupLabel>Clipboard</GroupLabel>
      </Group>
      <Group $w={153}>
        <GroupBody $pad={2}>
          <Big w={26} icon={icons.getData}>Get<br />Data<Arrow /></Big>
          <Big w={27} icon={icons.recent}>Recent<br />Sources<Arrow /></Big>
          <Big w={28} icon={icons.enter}>Enter<br />Data</Big>
          <Big w={36} icon={icons.edit} sep>Edit<br />Queries<Arrow /></Big>
          <Big w={30} icon={icons.refresh}>Refresh</Big>
        </GroupBody>
        <GroupLabel>External data</GroupLabel>
      </Group>
      <Group $w={125}>
        <GroupBody $pad={3}>
          <Big w={25} icon={icons.newPage}>New<br />Page<Arrow /></Big>
          <Big w={24} icon={icons.newVisual}>New<br />Visual</Big>
          <Big w={27} icon={icons.buttons}>Buttons<br /><Arrow /></Big>
          <SmallStack $w={44}>
            <SmallButton>{icons.textBox} Text box</SmallButton>
            <SmallButton>{icons.image} Image</SmallButton>
            <SmallButton>{icons.shapes} Shapes<Arrow /></SmallButton>
          </SmallStack>
        </GroupBody>
        <GroupLabel>Insert</GroupLabel>
      </Group>
      <Group $w={71}>
        <GroupBody>
          <Big w={44} icon={icons.market}>From<br />Marketplace</Big>
          <Big w={26} icon={icons.fromFile}>From<br />File</Big>
        </GroupBody>
        <GroupLabel>Custom visuals</GroupLabel>
      </Group>
      <Group $w={50}>
        <GroupBody>
          <Big w={49} icon={icons.manage}>Manage<br />Relationships</Big>
        </GroupBody>
        <GroupLabel>Relationships</GroupLabel>
      </Group>
      <Group $w={82}>
        <GroupBody $pad={4}>
          <SmallStack $w={76}>
            <SmallButton>{icons.measure} New Measure</SmallButton>
            <SmallButton>{icons.column} New Column</SmallButton>
            <SmallButton>{icons.measure} New Quick Measure</SmallButton>
          </SmallStack>
        </GroupBody>
        <GroupLabel>Calculations</GroupLabel>
      </Group>
      <Group $w={31}>
        <GroupBody>
          <Big w={30} icon={icons.publish}>Publish</Big>
        </GroupBody>
        <GroupLabel>Share</GroupLabel>
      </Group>
    </Ribbon>
  );
}

export default function App() {
  return (
    <Shell>
      <Global />
      <TitleBar>
        <QuickAccess>
          <svg width="9" height="9" viewBox="0 0 9 9"><rect width="9" height="9" fill="#f2c811" /><path d="M2 7 V5 M4.5 7 V3 M7 7 V2" stroke="#222" strokeWidth="1.3" /></svg>
          <Divider />
          <svg width="9" height="9" viewBox="0 0 9 9" fill="none" stroke="#7d6bb0"><rect x=".5" y=".5" width="8" height="8" /><rect x="2.5" y=".5" width="4" height="3" /><rect x="2" y="5.5" width="5" height="3" /></svg>
          <svg width="9" height="8" viewBox="0 0 9 8" fill="none" stroke="#3f6fb0"><path d="M1 1 V4 H4 M1 4 A3.5 3.5 0 1 1 5 7.5" /></svg>
          <svg width="9" height="8" viewBox="0 0 9 8" fill="none" stroke="#b8c4d6"><path d="M8 1 V4 H5 M8 4 A3.5 3.5 0 1 0 4 7.5" /></svg>
          <svg width="5" height="6" viewBox="0 0 5 6" fill="#444"><path d="M0 0 H5 V1 H0 Z M0 3 H5 L2.5 6 Z" /></svg>
          <Divider />
        </QuickAccess>
        <ContextHeader>Visual tools</ContextHeader>
        <WindowTitle>Reports 2 - Power BI Desktop</WindowTitle>
        <WindowButtons>
          <svg width="7" height="7" viewBox="0 0 7 7" stroke="#555"><path d="M0 3.5 H7" /></svg>
          <svg width="7" height="7" viewBox="0 0 7 7" fill="none" stroke="#333"><rect x=".5" y=".5" width="6" height="6" /></svg>
          <svg width="7" height="7" viewBox="0 0 7 7" stroke="#333"><path d="M0 0 L7 7 M7 0 L0 7" /></svg>
        </WindowButtons>
      </TitleBar>
      <TabRow>
        <Tab $file $w={32}>File</Tab>
        <Tab $active $w={45}>Home</Tab>
        <Tab $w={32}>View</Tab>
        <Tab $w={46}>Modeling</Tab>
        <Tab $w={43}>Help</Tab>
        <Tab $ctx $w={39}>Format</Tab>
        <Tab $ctxEnd $w={49}>Data / Drill</Tab>
        <SignIn>
          Sign in
          <svg width="6" height="4" viewBox="0 0 6 4" fill="none" stroke="#bbb"><path d="M.5 3.5 L3 1 L5.5 3.5" /></svg>
          <HelpDot>?</HelpDot>
        </SignIn>
      </TabRow>
      <RibbonBar />
      <Main>
        <LeftRail>
          <RailItem $active $top={3}>
            <svg width="12" height="12" viewBox="0 0 12 12" fill="none" stroke="#ddd"><rect x=".5" y=".5" width="11" height="11" /><path d="M3 9.5 V6 M6 9.5 V3 M9 9.5 V5" strokeWidth="1.6" /></svg>
          </RailItem>
          <RailItem>
            <svg width="12" height="12" viewBox="0 0 12 12" fill="none" stroke="#888"><rect x=".5" y=".5" width="11" height="11" /><path d="M.5 3.5 H11.5 M.5 6.5 H11.5 M.5 9 H11.5 M4 3.5 V11.5 M8 3.5 V11.5" /></svg>
          </RailItem>
          <RailItem>
            <svg width="12" height="11" viewBox="0 0 12 11" fill="none" stroke="#888"><rect x=".5" y="3.5" width="4" height="3" /><rect x="7.5" y=".5" width="4" height="3" /><rect x="7.5" y="7.5" width="4" height="3" /><path d="M4.5 5 H6 V2 H7.5 M6 5 V9 H7.5" /></svg>
          </RailItem>
        </LeftRail>
        <Center>
          <Canvas>
            <Page>
              <VisualHead>
                <svg width="8" height="7" viewBox="0 0 8 7" fill="none" stroke="#999"><rect x=".5" y=".5" width="7" height="6" /><path d="M2 5 L6 2" /></svg>
                <svg width="8" height="2" viewBox="0 0 8 2" fill="#888"><rect width="1.5" height="1.5" /><rect x="3" width="1.5" height="1.5" /><rect x="6" width="1.5" height="1.5" /></svg>
              </VisualHead>
              <MatrixTable />
            </Page>
            <HScroll><HThumb /></HScroll>
            <Corner $tl /><Corner $tr /><Corner $bl /><Corner $br />
            <TopGrip />
            <Grip $pos="left" /><Grip $pos="right" /><Grip $pos="bottom" />
          </Canvas>
          <SheetBar>
            <SheetArrows><span>‹</span><span>›</span></SheetArrows>
            {sheets.map(([name, w]) => <Sheet key={name} $w={w}>{name}</Sheet>)}
            <Sheet $active $w={49}>MATRIX</Sheet>
            <AddSheet>+</AddSheet>
          </SheetBar>
        </Center>
        <VizPanel />
        <FieldsStrip>
          <svg width="6" height="9" viewBox="0 0 6 9" fill="none" stroke="#bbb"><path d="M5 1 L1 4.5 L5 8" /></svg>
          <FieldsLabel>FIELDS</FieldsLabel>
        </FieldsStrip>
      </Main>
    </Shell>
  );
}
